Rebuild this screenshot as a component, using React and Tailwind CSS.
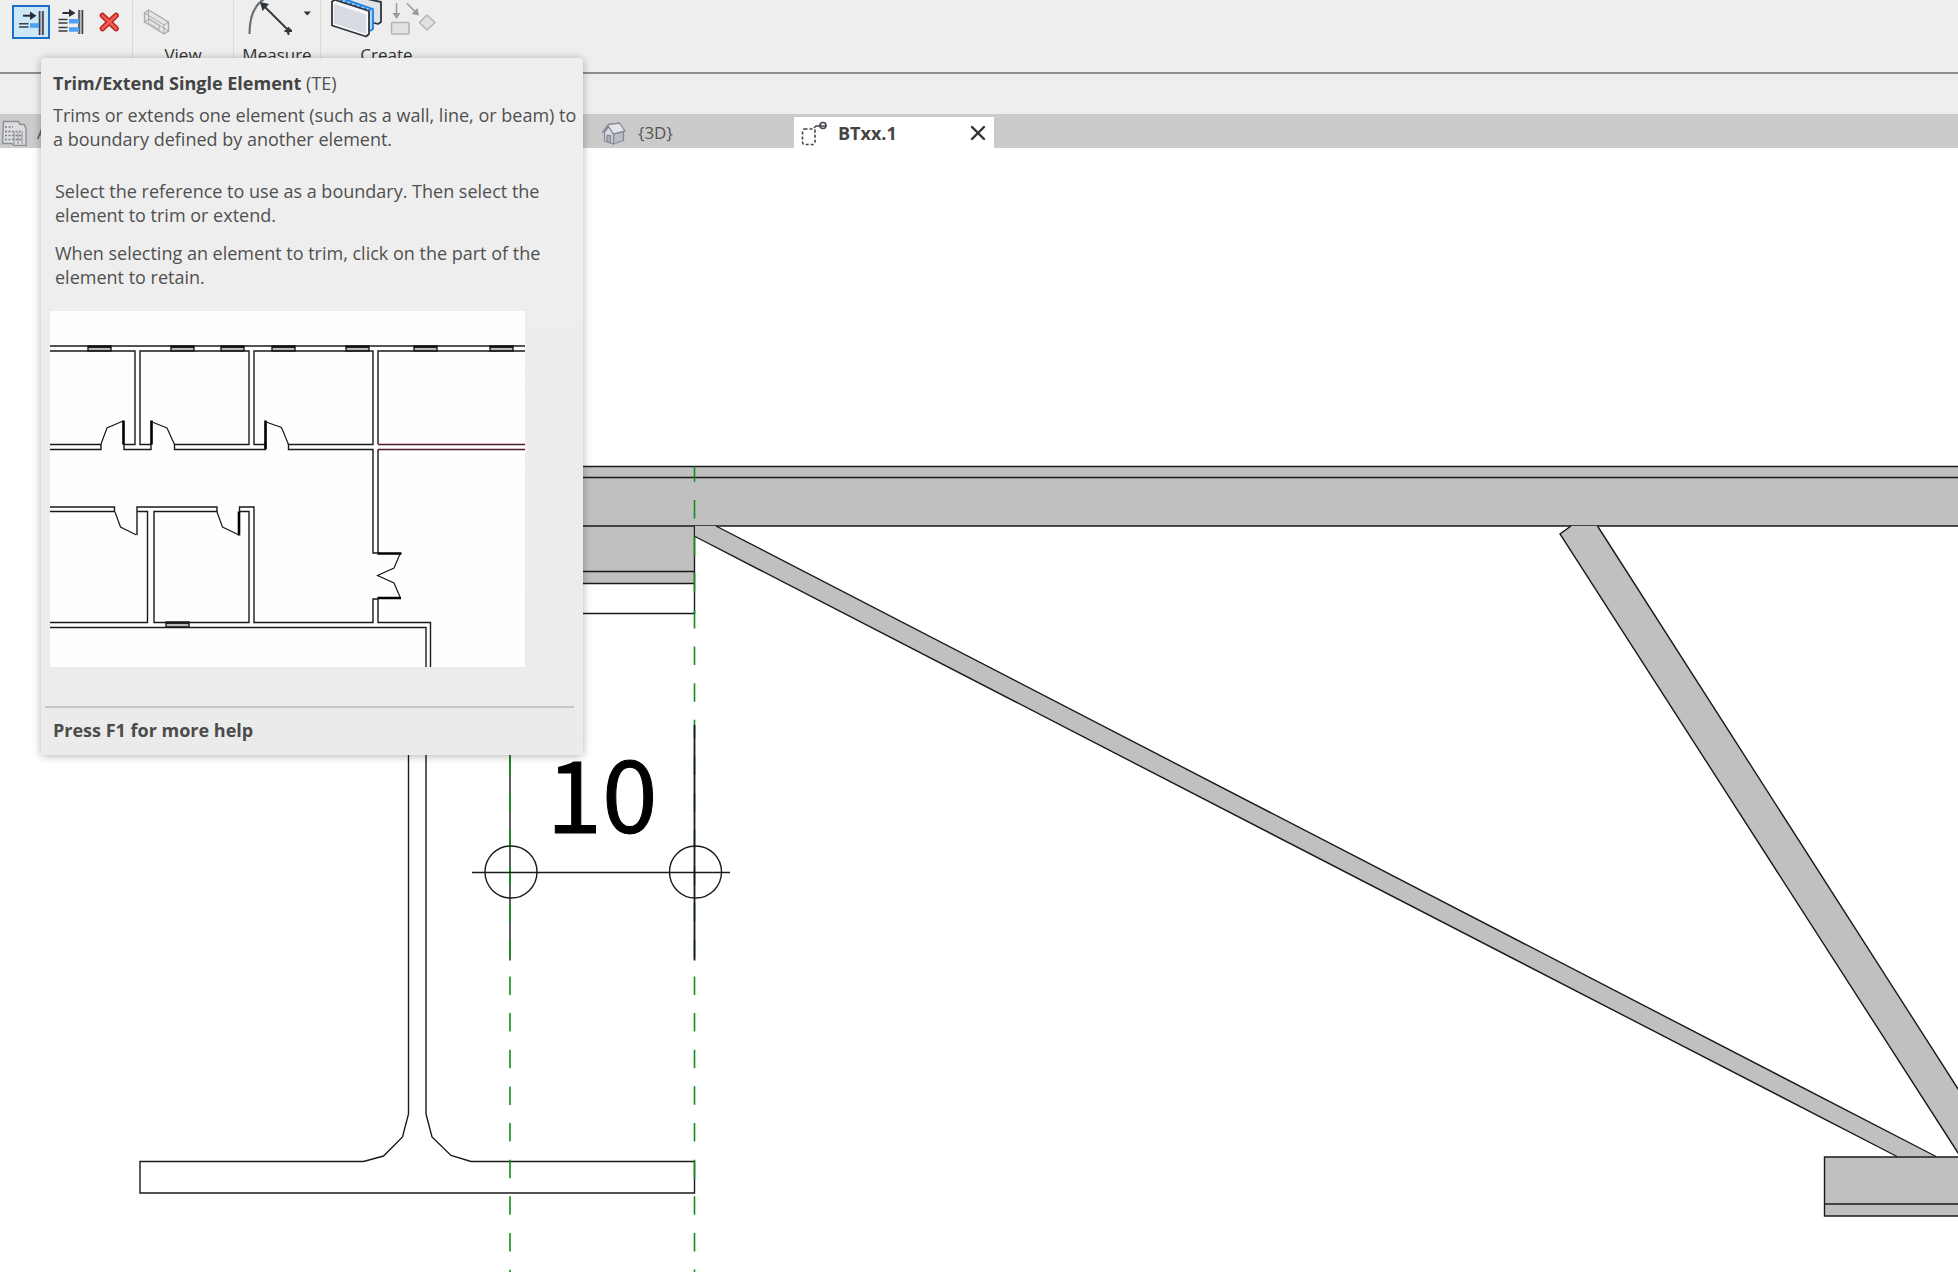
import { X } from 'lucide-react'

const ink = '#1a1a1a'
const green = '#109018'

const windows = [
  [88, 346],
  [171, 346],
  [221, 346],
  [272, 346],
  [346, 346],
  [414, 346],
  [490, 346],
  [166, 622],
]

const help = [
  'Select the reference to use as a boundary. Then select the element to trim or extend.',
  'When selecting an element to trim, click on the part of the element to retain.',
]

function TrimSingleIcon() {
  return (
    <svg width="34" height="30" viewBox="14 6 34 30" fill="none" aria-hidden="true">
      <path d="M41.5 10v24" stroke="#b9bcc0" strokeWidth="3" />
      <path d="M39.5 10v24M43 10v24" stroke="#3a3d45" strokeWidth="1.6" />
      <path d="M19 22.8h9.5M19 26h9.5" stroke="#3a3d45" strokeWidth="1.5" />
      <path d="M30 24.5h9" stroke="#4aa3f5" strokeWidth="4.6" />
      <path d="M23 14.7h8" stroke="#2b2e36" strokeWidth="2" />
      <path d="M30 10.5l6.5 4.2-6.5 4.2z" fill="#2b2e36" />
    </svg>
  )
}

function TrimMultipleIcon() {
  return (
    <svg width="28" height="30" viewBox="57 6 28 30" fill="none" aria-hidden="true">
      <path d="M81 10v24" stroke="#b9bcc0" strokeWidth="3" />
      <path d="M79 10v24M82.5 10v24" stroke="#3a3d45" strokeWidth="1.5" />
      <path d="M58.5 19.5h9M58.5 23h9M58.5 27.5h9M58.5 31h9" stroke="#3a3d45" strokeWidth="1.4" />
      <path d="M69 21.2h10M69 29.5h10" stroke="#4aa3f5" strokeWidth="4.5" />
      <path d="M62.5 13h7" stroke="#2b2e36" strokeWidth="2" />
      <path d="M69 9l6.5 4-6.5 4z" fill="#2b2e36" />
    </svg>
  )
}

function DeleteIcon() {
  return (
    <svg width="22" height="22" viewBox="98 11 22 22" fill="none" strokeLinecap="round" aria-hidden="true">
      <path d="M102.5 15.5l13.5 13M116 15.5l-13.5 13" stroke="#b3201d" strokeWidth="5.6" />
      <path d="M102.5 15.5l13.5 13M116 15.5l-13.5 13" stroke="#f45a50" strokeWidth="3" />
    </svg>
  )
}

function BoxIcon() {
  return (
    <svg width="28" height="36" viewBox="142 0 28 36" fill="none" stroke="#a9a9a9" strokeLinejoin="round" aria-hidden="true">
      <path d="M144.5 13l4-3 20 12v9l-4.5 3-19.5-12z" fill="#e6e6e6" strokeWidth="1.4" />
      <path d="M144.5 13l19.5 12v9M164 25l4.5-3M148.5 10v9l-4 3M148.5 19l20 12" />
      <path d="M148.5 18.5l11 6.5v4.5l-11-6.5z" strokeWidth="0.8" />
    </svg>
  )
}

function MeasureIcon() {
  return (
    <svg width="66" height="36" viewBox="246 0 66 36" fill="none" aria-hidden="true">
      <path d="M249.5 34c0-16 4-28 14-34.5" stroke="#6b7078" strokeWidth="2.2" />
      <path d="M263 5l25 25" stroke="#2f333b" strokeWidth="1.8" />
      <path d="M260 2l9 2-6.5 7z" fill="#2f333b" />
      <path d="M284.5 31h7.5M288.5 27v8M287 33l4-4" stroke="#2f333b" strokeWidth="1.8" />
      <path d="M303.5 11.5h7.5l-3.75 4z" fill="#333" />
    </svg>
  )
}

function CreateIcon() {
  return (
    <svg width="106" height="38" viewBox="330 0 106 38" fill="none" strokeLinejoin="round" aria-hidden="true">
      <path d="M345 -6l36 8v20l-3 2-33-9z" fill="#dfe2e7" stroke="#2f333b" strokeWidth="1.8" />
      <path d="M338 -3l35 12v20l-3 2" fill="#a9d3fb" stroke="#1c7fe0" strokeWidth="1.8" />
      <path d="M340 0l31 10" stroke="#1c7fe0" strokeWidth="1.5" strokeDasharray="3 2" />
      <path d="M332 1.5l3-1.5 34 11v23l-3 2.5-34-11z" fill="#f7f8fa" stroke="#2f333b" strokeWidth="1.8" />
      <path d="M334 4l32 10.5v19.5l-32-10.5z" fill="#d8dbe1" />
      <path d="M396.5 3v11M407 3.5l8 8" stroke="#9a9a9a" strokeWidth="1.5" />
      <path d="M392.5 13h8l-4 6zM419 15.5l-7.5-1.5 6-6z" fill="#9a9a9a" />
      <rect x="391.5" y="22.5" width="17.5" height="11.5" rx="1" fill="#e2e2e2" stroke="#b4b4b4" strokeWidth="1.5" />
      <path d="M427 15l8 7.5-8 7.5-7.5-7.5z" fill="#e2e2e2" stroke="#b4b4b4" strokeWidth="1.5" />
    </svg>
  )
}

function SheetIcon() {
  return (
    <svg width="26" height="26" viewBox="1 119 26 26" fill="none" aria-hidden="true">
      <path d="M3.5 120.5h15l1.5 3h4l2 4v17h-12l-2-2h-9.5z" fill="#dcdddf" stroke="#8b8e94" strokeWidth="1.4" />
      <path d="M5 126h8M5 130.5h18M5 134.5h18M5 138.5h18" stroke="#7d8087" strokeWidth="1.5" strokeDasharray="2 1.5" />
      <path d="M14 131v12M18 131v12M22 131v12" stroke="#8b8e94" />
    </svg>
  )
}

function HouseIcon() {
  return (
    <svg width="24" height="24" viewBox="602 120 24 24" fill="none" stroke="#858a93" strokeWidth="1.3" strokeLinejoin="round" aria-hidden="true">
      <path d="M604.5 131l4-5.5 5 7v10.5l-9-3z" fill="#d9dbdf" />
      <path d="M613.5 132.5l10-2v9l-10 3.5z" fill="#b9bdc4" />
      <path d="M602.5 131.5l6-8 11-1.5 5.5 8-11.5 3-5-7.5z" fill="#e3e5e8" />
      <path d="M607 140.5v-6h3.5v7.5z" fill="#aeb2ba" />
    </svg>
  )
}

function DetailIcon() {
  return (
    <svg width="27" height="26" viewBox="801 120 27 26" fill="none" stroke="#41444c" aria-hidden="true">
      <rect x="802.5" y="129" width="12.5" height="15.5" rx="2" strokeWidth="1.6" strokeDasharray="3 2" />
      <path d="M814 128l2-2h10" strokeWidth="1.5" />
      <circle cx="823" cy="125.5" r="3" strokeWidth="1.6" />
    </svg>
  )
}

function RibbonGroup({ label, className, children }) {
  return (
    <div className={`flex flex-col border-r border-[#dadada] h-[67px] ${className}`}>
      <div className="h-[43px]">{children}</div>
      {label && <span className="text-center text-[17px] leading-6 text-[#333]">{label}</span>}
    </div>
  )
}

function FloorPlan() {
  return (
    <svg className="block w-[475px]" viewBox="50 311 475 356" fill="none" stroke={ink} strokeWidth="1.4" role="img" aria-label="Floor plan">
      <rect x="50" y="311" width="475" height="356" fill="#fefefe" stroke="none" />
      <path d="M50 346H525" />
      {windows.map(([x, y]) => (
        <g key={`${x}-${y}`}>
          <rect x={x} y={y} width="23" height="5" fill="#bbb" />
          <path d={`M${x} ${y + 1}h23`} strokeWidth="1.6" stroke="#000" />
        </g>
      ))}
      <path d="M50 351H135V444.5H124V449.5H151V444.5H140V351H249V444.5H174.5V449.5H265.5V444.5H254V351H373V444.5H288.5V449.5H373V553H378V449.5" />
      <path d="M50 444.5H101V449.5H50M525 351H378V444" />
      <path d="M378 444.5H525M378 449.5H525" stroke="#4a1a30" />
      <path d="M50 507H114.5V511.5H50M137 535V507H217V511.5H154V622.5H249V511.5H239.5V507H254V622.5H373V599H378V622.5H430.5V667" />
      <path d="M137 511.5H147.5V622.5H50M50 627.5H426V667" />
      <path d="M123.5 420.5V444.5M151.5 420.5V444.5M265.5 420.5V449M239 511.5V535.5M377.5 553.5H401.5M377.5 598H401" stroke="#000" strokeWidth="2.6" />
      <path
        d="M123 421L107 428L101 444M152 422L167 428L174.5 444.5M266 422L281.5 427.5L288.5 444.5M115 512L120.5 527L136.5 535M217 512L222.5 527L239 535M400 554L394 568L377.5 575.5L394 583L400 597"
        strokeWidth="1.2"
      />
    </svg>
  )
}

function Drawing() {
  return (
    <svg className="block w-full" viewBox="0 148 1958 1124" fill="none" stroke={ink} strokeWidth="1.4" role="img" aria-label="Detail view">
      {/* top chord and bearing seat */}
      <path d="M560 466.5H1960V526H695V583.5H560z" fill="#c0c0c0" stroke="none" />
      <path d="M560 466.5H1960M560 477.5H1960M560 526H1960M560 571.5H694.5M560 583.5H694.5M560 613.5H694.5V526" />

      {/* web members */}
      <path d="M716 526L1936 1156.5H1897L695 536.5V526z" fill="#c0c0c0" stroke="none" />
      <path d="M716 526L1936 1156.5M695 536.5L1897 1156.5" />
      <path d="M1571 526L1560 534L1960 1156V1092L1597.5 526z" fill="#c0c0c0" stroke="none" />
      <path d="M1571 526L1560 534L1960 1156M1597.5 526L1960 1092" />

      {/* bottom chord */}
      <path d="M1965 1157H1824.5V1216H1965M1824.5 1204H1965" fill="#c0c0c0" />

      {/* column */}
      <path d="M408.5 740V1114L402.5 1137L383.5 1156L363.5 1161.5H140V1193H694.5V1161.5H471L451 1155.5L432 1137L426 1114V740" />

      {/* dimension */}
      <path d="M510 740V960.5" />
      <path d="M510 719.9V1272" stroke={green} strokeWidth="1.6" strokeDasharray="18.5 18.15" />
      <path d="M694.5 466.5V1272" stroke={green} strokeWidth="1.6" strokeDasharray="18.5 18.15" strokeDashoffset="3.2" />
      <path d="M694.5 725V960.5" strokeWidth="1.8" />
      <path d="M472 872.5H730" />
      <circle cx="511" cy="872" r="26" />
      <circle cx="695.5" cy="872" r="26" />
      <text x="602" y="833" textAnchor="middle" className="text-[100px] font-['Noto_Sans_CJK_JP',sans-serif]" fill="#000" stroke="#000" strokeWidth="1">
        10
      </text>
    </svg>
  )
}

function HelpTip() {
  return (
    <div
      role="tooltip"
      className="absolute left-[41px] top-[58px] w-[542px] rounded-sm bg-linear-to-b from-[#efefef] to-[#ebebeb] py-[13px] text-lg leading-6 text-[#505050] shadow-[0_1px_8px_rgba(0,0,0,0.3)]"
    >
      <h2 className="px-3">
        <strong className="font-bold text-[#444]">Trim/Extend Single Element</strong> (TE)
      </h2>
      <p className="mt-2 pl-3 pr-1">Trims or extends one element (such as a wall, line, or beam) to a boundary defined by another element.</p>
      <div className="mt-7 flex flex-col gap-[14px] pl-[14px] pr-8">
        {help.map((text) => (
          <p key={text}>{text}</p>
        ))}
      </div>
      <div className="mt-[22px] pl-[9px]">
        <FloorPlan />
      </div>
      <div className="ml-1 mr-[9px] mt-[39px] border-t-2 border-[#c6c6c6] pl-2 pt-[10px] font-bold text-[#4c4c4c]">Press F1 for more help</div>
    </div>
  )
}

export default function App() {
  return (
    <div className="relative min-h-screen overflow-hidden bg-white font-['Open_Sans',sans-serif]">
      <header className="bg-[#eeeeee]">
        <div className="flex h-[74px] border-b-2 border-[#8e8e8e]">
          <RibbonGroup className="w-[133px]">
            <div className="flex items-start pl-3 pt-[5px]">
              <button aria-label="Trim/Extend Single Element" className="flex h-[34px] w-[38px] items-center justify-center border-2 border-[#1b70c8] bg-[#cce8f8]">
                <TrimSingleIcon />
              </button>
              <button aria-label="Trim/Extend Multiple Elements" className="ml-[7px] pt-px">
                <TrimMultipleIcon />
              </button>
              <button aria-label="Delete" className="ml-[13px] pt-[6px]">
                <DeleteIcon />
              </button>
            </div>
          </RibbonGroup>
          <RibbonGroup label="View" className="w-[101px]">
            <button aria-label="View" className="ml-[9px]">
              <BoxIcon />
            </button>
          </RibbonGroup>
          <RibbonGroup label="Measure" className="w-[87px]">
            <button aria-label="Measure" className="ml-3">
              <MeasureIcon />
            </button>
          </RibbonGroup>
          <RibbonGroup label="Create" className="w-[132px] border-transparent">
            <button aria-label="Create" className="ml-[9px]">
              <CreateIcon />
            </button>
          </RibbonGroup>
        </div>
        <div className="h-10" />
        <nav className="flex h-[34px] items-end bg-[#cbcbcb] text-[17px] text-[#555]">
          <button className="flex h-[31px] w-[594px] items-center gap-[10px] pl-px pt-px">
            <SheetIcon />A
          </button>
          <button className="flex h-[31px] w-[200px] items-center gap-3 pl-2 pt-px">
            <HouseIcon />
            {'{3D}'}
          </button>
          <div className="flex h-[31px] w-[200px] items-center bg-white pl-[7px] pr-1 pt-px text-[#444]">
            <button className="flex flex-1 items-center gap-[10px] text-lg font-bold">
              <DetailIcon />
              BTxx.1
            </button>
            <button aria-label="Close">
              <X size={24} strokeWidth={2.4} color="#333" />
            </button>
          </div>
        </nav>
      </header>
      <main>
        <Drawing />
      </main>
      <HelpTip />
    </div>
  )
}
